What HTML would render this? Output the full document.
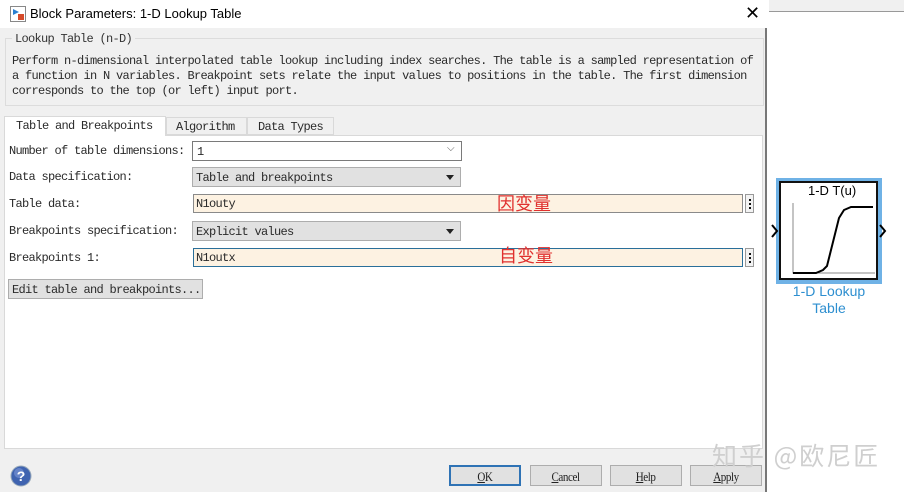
<!DOCTYPE html>
<html><head><style>
*{margin:0;padding:0;box-sizing:border-box}
body{width:904px;height:492px;position:relative;overflow:hidden;background:#fff;font-family:"Liberation Mono","Noto Sans CJK SC",monospace;font-size:11px;color:#222}
.a{position:absolute}
.m{font-family:"Liberation Mono","Noto Serif CJK SC",monospace;font-size:12px;letter-spacing:-0.7px;white-space:pre;color:#2a2a2a}
.lbl{left:9px}
.dd{left:192px;width:269px;height:20px;background:#e1e1e1;border:1px solid #adadad;padding:3px 0 0 3px}
.dd:after{content:"";position:absolute;right:6px;top:7px;border:4px solid transparent;border-top:5px solid #222;border-bottom:0}
.tf{left:193px;width:550px;height:19px;background:#fdf2e2;border:1px solid #8a8a8a;padding:2px 0 0 2px}
.el{left:745px;width:9px;height:19px;border:1px solid #999;background:#f3f3f3;display:flex;flex-direction:column;align-items:center;justify-content:center;gap:2px}
.el i{display:block;width:2px;height:2px;background:#111}
.btn{top:465px;height:21px;width:72px;background:#e1e1e1;border:1px solid #adadad;text-align:center;padding-top:3px;font-family:"Liberation Serif",serif;font-size:13px;letter-spacing:-0.5px}
.btn span{display:inline-block;transform:scaleX(.85)}
.cn{color:#e0302e;font-family:"Noto Sans CJK SC",sans-serif;font-size:18px}
</style></head><body>
<div class="a" style="left:0;top:0;width:767px;height:492px;background:#f0f0f0;border-right:2px solid #777"></div>
<div class="a" style="left:0;top:0;width:767px;height:28px;background:#fff"></div>
<div class="a" style="left:769px;top:0;width:135px;height:12px;background:#f0f0f0;border-bottom:1px solid #999"></div>
<svg class="a" style="left:10px;top:6px" width="16" height="16"><rect x="0.5" y="0.5" width="15" height="15" fill="#fff" stroke="#888"/><path d="M3 3l6 3-6 3z" fill="#2a7fd0"/><rect x="8" y="8" width="6" height="6" fill="#d64a2a"/></svg>
<div class="a" style="left:30px;top:6px;font-family:'Liberation Sans','Noto Sans CJK SC',sans-serif;font-size:13px;color:#000">Block Parameters: 1-D Lookup Table</div>
<div class="a" style="left:745px;top:3px;font-family:'Liberation Sans',sans-serif;font-size:18px;color:#000">✕</div>
<div class="a" style="left:5px;top:38px;width:759px;height:68px;border:1px solid #dcdcdc"></div>
<div class="a m" style="left:12px;top:32px;background:#f0f0f0;padding:0 3px;color:#333">Lookup Table (n-D)</div>
<div class="a m" style="left:12px;top:54px;line-height:15px">Perform n-dimensional interpolated table lookup including index searches. The table is a sampled representation of
a function in N variables. Breakpoint sets relate the input values to positions in the table. The first dimension
corresponds to the top (or left) input port.</div>
<div class="a" style="left:4px;top:135px;width:759px;height:314px;background:#fff;border:1px solid #d9d9d9"></div>
<div class="a m" style="left:4px;top:116px;width:162px;height:20px;background:#fff;border:1px solid #d9d9d9;border-bottom:none;padding:2px 0 0 11px">Table and Breakpoints</div>
<div class="a m" style="left:166px;top:117px;width:81px;height:18px;background:#f0f0f0;border:1px solid #d9d9d9;padding:2px 0 0 9px">Algorithm</div>
<div class="a m" style="left:247px;top:117px;width:87px;height:18px;background:#f0f0f0;border:1px solid #d9d9d9;padding:2px 0 0 10px">Data Types</div>
<div class="a m lbl" style="top:144px">Number of table dimensions:</div>
<div class="a m" style="left:192px;top:141px;width:270px;height:20px;border:1px solid #7a7a7a;background:#fff;padding:3px 0 0 4px">1</div>
<div class="a" style="left:447px;top:143px;font-size:10px;color:#555;font-family:'Liberation Sans',sans-serif">⌵</div>
<div class="a m lbl" style="top:170px">Data specification:</div>
<div class="a m dd" style="top:167px">Table and breakpoints</div>
<div class="a m lbl" style="top:197px">Table data:</div>
<div class="a m tf" style="top:194px">N1outy</div>
<div class="a el" style="top:194px"><i></i><i></i><i></i></div>
<div class="a m lbl" style="top:224px">Breakpoints specification:</div>
<div class="a m dd" style="top:221px">Explicit values</div>
<div class="a m lbl" style="top:251px">Breakpoints 1:</div>
<div class="a m tf" style="top:248px;border-color:#2a6f9a">N1outx</div>
<div class="a el" style="top:248px"><i></i><i></i><i></i></div>
<div class="a cn" style="left:497px;top:190px">因变量</div>
<div class="a cn" style="left:499px;top:242px">自变量</div>
<div class="a m" style="left:8px;top:279px;width:195px;height:20px;background:#e1e1e1;border:1px solid #adadad;padding:3px 0 0 3px">Edit table and breakpoints...</div>
<svg class="a" style="left:10px;top:465px" width="22" height="22"><circle cx="11" cy="11" r="10" fill="#3f63b0" stroke="#9ab" /><circle cx="9" cy="8" r="5" fill="#7f9ad8" opacity=".6"/><text x="11" y="16" font-size="14" font-family="Liberation Sans" font-weight="bold" fill="#fff" text-anchor="middle">?</text></svg>
<div class="a btn" style="left:449px;border:2px solid #2f73b5;padding-top:2px"><span><u>O</u>K</span></div>
<div class="a btn" style="left:530px"><span><u>C</u>ancel</span></div>
<div class="a btn" style="left:610px"><span><u>H</u>elp</span></div>
<div class="a btn" style="left:690px"><span><u>A</u>pply</span></div>
<div class="a" style="left:776px;top:178px;width:106px;height:106px;background:#6fb2e6"></div>
<div class="a" style="left:779px;top:181px;width:99px;height:99px;background:#fff;border:2px solid #111"></div>
<div class="a" style="left:808px;top:183px;font-family:'Liberation Sans',sans-serif;font-size:13px;color:#000">1-D T(u)</div>
<svg class="a" style="left:781px;top:183px" width="96" height="96"><path d="M12 20V90H94" fill="none" stroke="#888" stroke-width="1"/><path d="M12 90H35L42 87L46 83L58 35L63 27L70 24H92" fill="none" stroke="#000" stroke-width="2"/></svg>
<svg class="a" style="left:770px;top:223px" width="120" height="16"><path d="M2 2l5 6-5 6" fill="none" stroke="#000" stroke-width="2"/><path d="M110 2l5 6-5 6" fill="none" stroke="#000" stroke-width="2"/></svg>
<div class="a" style="left:776px;top:283px;width:106px;text-align:center;font-family:'Liberation Sans',sans-serif;font-size:14px;line-height:17px;color:#2e8fd0">1-D Lookup<br>Table</div>
<div class="a" style="left:712px;top:437px;font-family:'Noto Sans CJK SC',sans-serif;font-size:25px;color:#cfcfcf;letter-spacing:2px;white-space:nowrap">知乎 @欧尼匠</div>
</body></html>
